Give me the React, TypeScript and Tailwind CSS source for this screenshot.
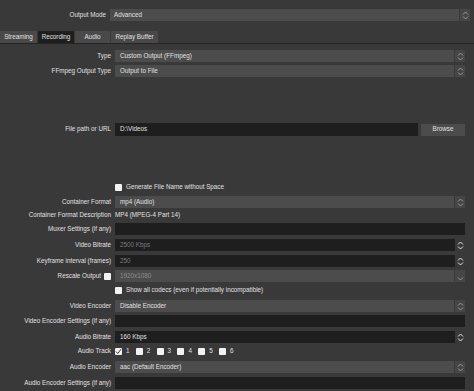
import React from 'react';

// OBS dark theme palette
const BG = 'bg-[#3a393a]';

const UpDown = ({ bright = false, downOnly = false }: { bright?: boolean; downOnly?: boolean }) => (
  <svg width="7" height="9" viewBox="0 0 7 9" fill="none" stroke={bright ? '#e6e6e6' : '#9a9a9a'} strokeWidth="1">
    {!downOnly && <polyline points="1,3.5 3.5,1 6,3.5" />}
    <polyline points="1,5.5 3.5,8 6,5.5" />
  </svg>
);

const Combo = ({ value, disabled = false, pl = 'pl-[5px]' }: { value: string; disabled?: boolean; pl?: string }) => (
  <div className="flex h-full flex-1 gap-px">
    <div className={`flex flex-1 items-center bg-[#4c4c4c] ${pl} ${disabled ? 'text-[#8c8c8c]' : 'text-[#e1e0e1]'}`}>
      {value}
    </div>
    <div className="flex w-[10px] items-center justify-center bg-[#464646]">
      <UpDown downOnly={disabled} />
    </div>
  </div>
);

const TextBox = ({ value = '' }: { value?: string }) => (
  <div className="flex h-full flex-1 items-center bg-[#1f1e1f] pl-[5px]">{value}</div>
);

const Spin = ({ value, disabled = false }: { value: string; disabled?: boolean }) => (
  <div className="flex h-full flex-1">
    <div className={`flex flex-1 items-center bg-[#1f1e1f] pl-[5px] ${disabled ? 'text-[#7a7a7a]' : 'text-[#e1e0e1]'}`}>
      {value}
    </div>
    <div className="flex w-[10px] items-center justify-center">
      <UpDown bright />
    </div>
  </div>
);

const Check = ({ checked = false }: { checked?: boolean }) => (
  <div className="flex h-[7px] w-[7px] items-center justify-center rounded-[1px] bg-[#f2f2f2]">
    {checked && (
      <svg width="7" height="7" viewBox="0 0 7 7" fill="none" stroke="#3a393a" strokeWidth="1">
        <polyline points="1,3.5 2.8,5.5 6,1.2" />
      </svg>
    )}
  </div>
);

const Row = ({
  label,
  mt,
  h = 'h-[12px]',
  children,
}: {
  label?: React.ReactNode;
  mt: string;
  h?: string;
  children: React.ReactNode;
}) => (
  <div className={`flex ${mt} ${h} pr-[9px]`}>
    <div className="flex w-[111px] shrink-0 items-center justify-end">{label}</div>
    <div className="ml-[4px] flex flex-1 items-center">{children}</div>
  </div>
);

const tabs = ['Streaming', 'Recording', 'Audio', 'Replay Buffer'];
const tabWidths = ['w-[37px]', 'w-[36px]', 'w-[35px]', 'w-[47px]'];

export default function App() {
  return (
    <div
      className={`h-[391px] w-[474px] overflow-hidden ${BG} pt-[9px] font-['Liberation_Sans',Arial,sans-serif] text-[6.3px] leading-none text-[#e1e0e1]`}
    >
      {/* output mode */}
      <div className="flex h-[12px] pr-[4px]">
        <div className="flex w-[106px] items-center justify-end">Output Mode</div>
        <div className="ml-[4px] flex flex-1">
          <Combo value="Advanced" pl="pl-[4px]" />
        </div>
      </div>

      {/* tabs */}
      <div className="mt-[10px] flex h-[12px] gap-px">
        {tabs.map((t, i) => (
          <div
            key={t}
            className={`flex items-center justify-center ${tabWidths[i]} ${
              t === 'Recording' ? 'bg-[#1f1e1f]' : 'bg-[#4a494a]'
            }`}
          >
            {t}
          </div>
        ))}
      </div>
      <div className="h-px bg-[#262526]" />

      <Row label="Type" mt="mt-[6px]">
        <Combo value="Custom Output (FFmpeg)" />
      </Row>
      <Row label="FFmpeg Output Type" mt="mt-[3px]">
        <Combo value="Output to File" />
      </Row>

      <Row label="File path or URL" mt="mt-[46px]" h="h-[13px]">
        <div className="flex h-full flex-1 items-center gap-[3px]">
          <TextBox value="D:\Videos" />
          <div className="flex h-[12px] w-[44px] items-center justify-center bg-[#4c4c4c]">Browse</div>
        </div>
      </Row>

      <Row mt="mt-[47px]" h="h-[9px]">
        <div className="flex items-center gap-[4px]">
          <Check />
          <span>Generate File Name without Space</span>
        </div>
      </Row>

      <Row label="Container Format" mt="mt-[4px]">
        <Combo value="mp4 (Audio)" />
      </Row>
      <Row label="Container Format Description" mt="mt-[2px]" h="h-[10px]">
        <span>MP4 (MPEG-4 Part 14)</span>
      </Row>
      <Row label="Muxer Settings (if any)" mt="mt-[3px]">
        <TextBox />
      </Row>
      <Row label="Video Bitrate" mt="mt-[4px]">
        <Spin value="2500 Kbps" disabled />
      </Row>
      <Row label="Keyframe interval (frames)" mt="mt-[4px]">
        <Spin value="250" disabled />
      </Row>
      <Row
        label={
          <div className="flex items-center gap-[3px]">
            <span>Rescale Output</span>
            <Check />
          </div>
        }
        mt="mt-[3px]"
      >
        <Combo value="1920x1080" disabled />
      </Row>
      <Row mt="mt-[4px]" h="h-[9px]">
        <div className="flex items-center gap-[4px]">
          <Check />
          <span>Show all codecs (even if potentially incompatible)</span>
        </div>
      </Row>
      <Row label="Video Encoder" mt="mt-[5px]">
        <Combo value="Disable Encoder" />
      </Row>
      <Row label="Video Encoder Settings (if any)" mt="mt-[3px]">
        <TextBox />
      </Row>
      <Row label="Audio Bitrate" mt="mt-[4px]">
        <Spin value="160 Kbps" />
      </Row>
      <Row label="Audio Track" mt="mt-[3px]" h="h-[11px]">
        <div className="flex items-center">
          {[1, 2, 3, 4, 5, 6].map((n) => (
            <div key={n} className="flex w-[20.8px] items-center gap-[4px]">
              <Check checked={n === 1} />
              <span>{n}</span>
            </div>
          ))}
        </div>
      </Row>
      <Row label="Audio Encoder" mt="mt-[4px]">
        <Combo value="aac (Default Encoder)" />
      </Row>
      <Row label="Audio Encoder Settings (if any)" mt="mt-[4px]">
        <TextBox />
      </Row>
    </div>
  );
}
